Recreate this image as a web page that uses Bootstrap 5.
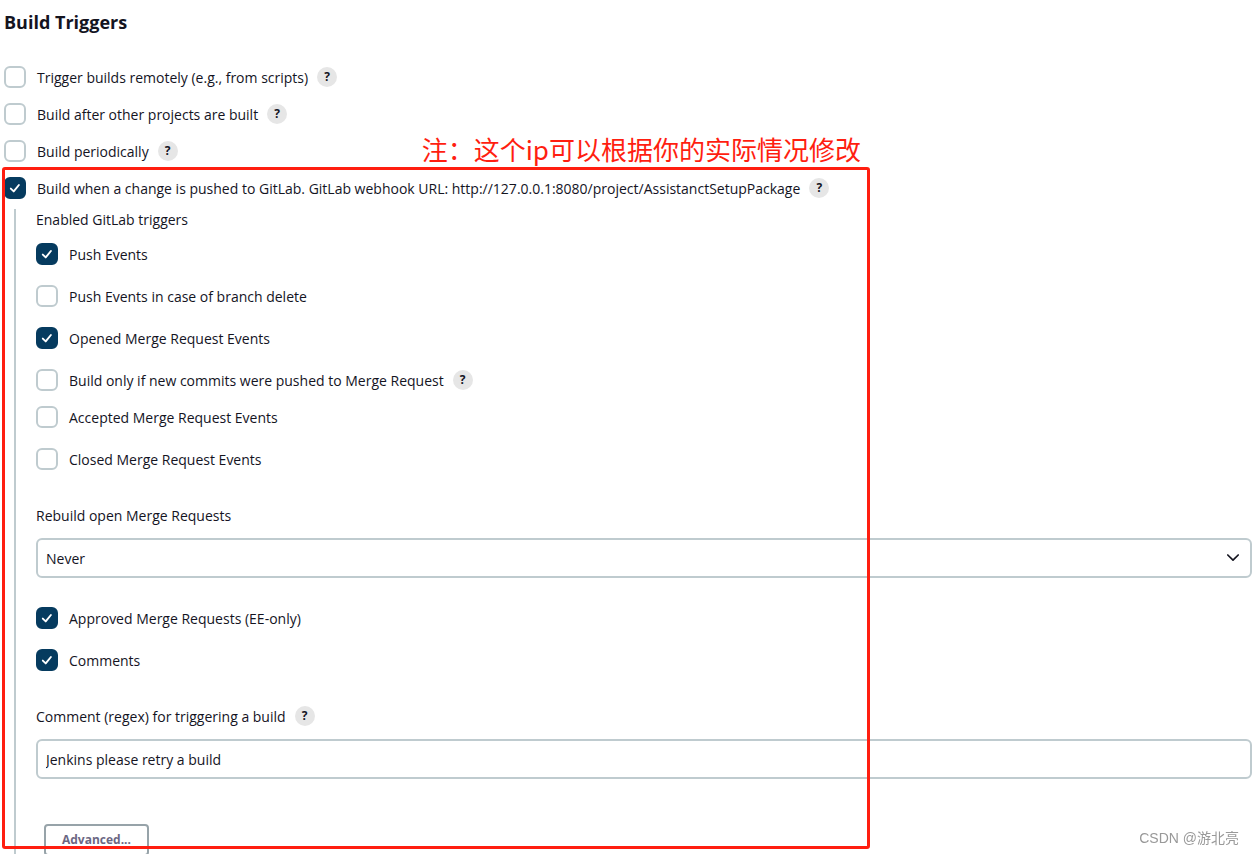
<!DOCTYPE html>
<html lang="en">
<head>
<meta charset="utf-8">
<meta name="viewport" content="width=device-width, initial-scale=1">
<title>Build Triggers</title>
<link href="https://cdn.jsdelivr.net/npm/bootstrap@5.3.0/dist/css/bootstrap.min.css" rel="stylesheet">
<style>
  :root { --ink: #14141f; --line: #bfcbcf; --accent: #063b5f; --note: #ff1e10; }
  body { font-family: "Open Sans", "Noto Sans CJK SC", sans-serif; font-size: 14px; line-height: 22px; color: var(--ink); }
  .config { padding: 11px 2px 0 4px; }
  .config h1 { font-size: 18px; line-height: 22px; font-weight: 700; margin-bottom: 33px; }
  .option { display: flex; align-items: center; min-height: 22px; margin: 0; padding: 0; }
  .option label { padding-top: 2px; line-height: 20px; }
  .option .form-check-input { flex: none; width: 22px; height: 22px; margin: 0 11px 0 0; float: none; border: 2px solid var(--line); border-radius: 6px; }
  .option .form-check-input:checked { background-color: var(--accent); border-color: var(--accent); background-size: 22px 22px; background-position: center;
    background-image: url("data:image/svg+xml,%3Csvg xmlns='http://www.w3.org/2000/svg' viewBox='0 0 22 22'%3E%3Cpath d='M6.8 11.6l2.9 2.8 5.2-6.4' fill='none' stroke='%23fff' stroke-width='1.9' stroke-linecap='round' stroke-linejoin='round'/%3E%3C/svg%3E"); }
  .help { flex: none; width: 20px; height: 20px; margin-left: 9px; padding: 0; border: 0; border-radius: 50%; background: #e6e6e6; color: var(--ink); font-size: 12px; line-height: 20px; font-weight: 700; }
  .choices { display: grid; gap: 15px; }
  .nested { margin: 10px 0 0 10px; padding: 0 0 20px 20px; border-left: 2px solid var(--line); }
  .events { display: grid; gap: 20px; }
  .setting { display: grid; gap: 12px; margin: 34px 0 29px; }
  .field { height: 40px; padding: 0 8px; border: 2px solid var(--line); border-radius: 6px; font-size: 14px; color: var(--ink); }
  .form-select.field { background-size: 14px 14px; background-position: right 10px center;
    background-image: url("data:image/svg+xml,%3Csvg xmlns='http://www.w3.org/2000/svg' viewBox='0 0 14 14'%3E%3Cpath d='M1.8 4L7 9.2 12.2 4' fill='none' stroke='%2314141f' stroke-width='1.7' stroke-linecap='round' stroke-linejoin='round'/%3E%3C/svg%3E"); }
  .advanced { margin: 16px 0 0 8px; padding: 3px 16px; border: 2px solid #97a3a9; border-radius: 4px; background: #fff; color: #6b6783; font-size: 12px; line-height: 22px; font-weight: 700; }
  .gitlab { margin-top: 15px; }
  .frame { top: -10px; left: -2px; width: 69.55%; height: 682px; border: 3px solid var(--note); border-radius: 3px; pointer-events: none; }
  .note { right: 6px; bottom: 100%; color: var(--note); font-family: "Noto Sans CJK SC", sans-serif; font-size: 26px; line-height: 42px; }
  .credit { right: 15px; bottom: 5px; color: #999; font-family: "Liberation Sans", "Noto Sans CJK SC", sans-serif; font-size: 14px; }
</style>
</head>
<body class="bg-white">
<main class="config vh-100 overflow-hidden">
  <h1>Build Triggers</h1>
  <div class="choices">
    <div class="option"><input class="form-check-input" type="checkbox" id="remote"><label for="remote">Trigger builds remotely (e.g., from scripts)</label><button type="button" class="help">?</button></div>
    <div class="option"><input class="form-check-input" type="checkbox" id="after"><label for="after">Build after other projects are built</label><button type="button" class="help">?</button></div>
    <div class="option"><input class="form-check-input" type="checkbox" id="periodic"><label for="periodic">Build periodically</label><button type="button" class="help">?</button></div>
  </div>
  <section class="gitlab position-relative">
    <div class="option"><input class="form-check-input" type="checkbox" id="gitlab" checked><label for="gitlab">Build when a change is pushed to GitLab. GitLab webhook URL: http://127.0.0.1:8080/project/AssistanctSetupPackage</label><button type="button" class="help">?</button></div>
    <div class="nested">
      <div class="mb-2 pb-1">Enabled GitLab triggers</div>
      <div class="events">
        <div class="option"><input class="form-check-input" type="checkbox" id="push" checked><label for="push">Push Events</label></div>
        <div class="option"><input class="form-check-input" type="checkbox" id="branch"><label for="branch">Push Events in case of branch delete</label></div>
        <div class="option"><input class="form-check-input" type="checkbox" id="opened" checked><label for="opened">Opened Merge Request Events</label></div>
        <div class="choices">
          <div class="option"><input class="form-check-input" type="checkbox" id="commits"><label for="commits">Build only if new commits were pushed to Merge Request</label><button type="button" class="help">?</button></div>
          <div class="option"><input class="form-check-input" type="checkbox" id="accepted"><label for="accepted">Accepted Merge Request Events</label></div>
        </div>
        <div class="option"><input class="form-check-input" type="checkbox" id="closed"><label for="closed">Closed Merge Request Events</label></div>
      </div>
      <div class="setting">
        <div class="option"><label for="rebuild">Rebuild open Merge Requests</label></div>
        <select class="form-select field" id="rebuild"><option>Never</option></select>
      </div>
      <div class="events">
        <div class="option"><input class="form-check-input" type="checkbox" id="approved" checked><label for="approved">Approved Merge Requests (EE-only)</label></div>
        <div class="option"><input class="form-check-input" type="checkbox" id="comments" checked><label for="comments">Comments</label></div>
      </div>
      <div class="setting">
        <div class="option"><label for="regex">Comment (regex) for triggering a build</label><button type="button" class="help">?</button></div>
        <input class="form-control field" type="text" id="regex" value="Jenkins please retry a build">
      </div>
      <button type="button" class="advanced">Advanced...</button>
    </div>
    <div class="frame position-absolute"><div class="note position-absolute text-nowrap">注：这个ip可以根据你的实际情况修改</div></div>
  </section>
</main>
<div class="credit position-fixed">CSDN @游北亮</div>
<script src="https://cdn.jsdelivr.net/npm/bootstrap@5.3.0/dist/js/bootstrap.bundle.min.js"></script>
</body>
</html>
